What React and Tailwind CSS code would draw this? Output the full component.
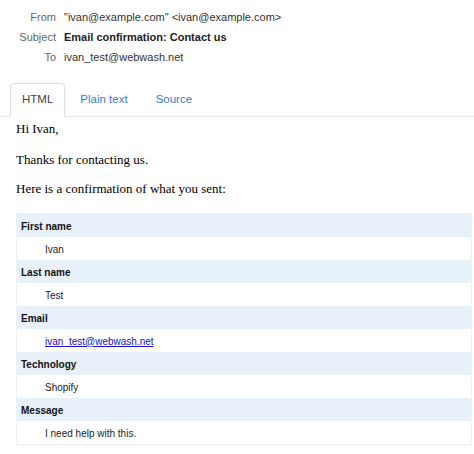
export default function App() {
  const headers = [
    { label: 'From', value: '"ivan@example.com" <ivan@example.com>', bold: false },
    { label: 'Subject', value: 'Email confirmation: Contact us', bold: true },
    { label: 'To', value: 'ivan_test@webwash.net', bold: false },
  ];

  const fields = [
    { name: 'First name', value: 'Ivan' },
    { name: 'Last name', value: 'Test' },
    { name: 'Email', value: 'ivan_test@webwash.net', link: true },
    { name: 'Technology', value: 'Shopify' },
    { name: 'Message', value: 'I need help with this.' },
  ];

  return (
    <div className="w-[474px] h-[454px] bg-white overflow-hidden font-['Liberation_Sans',Arial,sans-serif]">
      {/* Message headers */}
      <div className="pt-[7px] flex flex-col">
        {headers.map((h) => (
          <div key={h.label} className="grid grid-cols-[56px_1fr] gap-[8px] h-5 items-center text-[11px]">
            <span className="text-right text-[#666]">{h.label}</span>
            <span className={h.bold ? 'font-bold text-[#222]' : 'text-[#333]'}>{h.value}</span>
          </div>
        ))}
      </div>

      {/* Tabs */}
      <div className="mt-4 flex items-end border-b border-[#e3e3e3] pl-[10px] h-[34px] text-[11.5px]">
        <div className="h-[34px] -mb-px px-[11px] flex items-center border border-[#ddd] border-b-white rounded-t-[4px] bg-white text-[#444]">
          HTML
        </div>
        <div className="h-[33px] pl-[15px] pr-[14px] flex items-center text-[#3b7bbf]">Plain text</div>
        <div className="h-[33px] px-[14px] flex items-center text-[#3b7bbf]">Source</div>
      </div>

      {/* Body */}
      <div className="pl-4 pr-[2px] font-['Liberation_Serif','Times_New_Roman',serif] text-[13px] leading-4 text-black">
        <p className="mt-1">Hi Ivan,</p>
        <p className="mt-[15px]">Thanks for contacting us.</p>
        <p className="mt-[13px]">Here is a confirmation of what you sent:</p>

        <div className="mt-[16px] border border-[#eef0f2] font-['Liberation_Sans',Arial,sans-serif] text-[10px]">
          {fields.map((f) => (
            <div key={f.name}>
              <div className="h-[23px] pt-[2px] flex items-center px-[4px] bg-[#e8f0f9] font-bold text-[#111]">{f.name}</div>
              <div className="h-[23px] pt-[2px] flex items-center pl-[28px] bg-white text-[#222]">
                {f.link ? (
                  <a href="#" className="text-[#1a0dcc] underline">{f.value}</a>
                ) : (
                  f.value
                )}
              </div>
            </div>
          ))}
        </div>
      </div>
    </div>
  );
}
